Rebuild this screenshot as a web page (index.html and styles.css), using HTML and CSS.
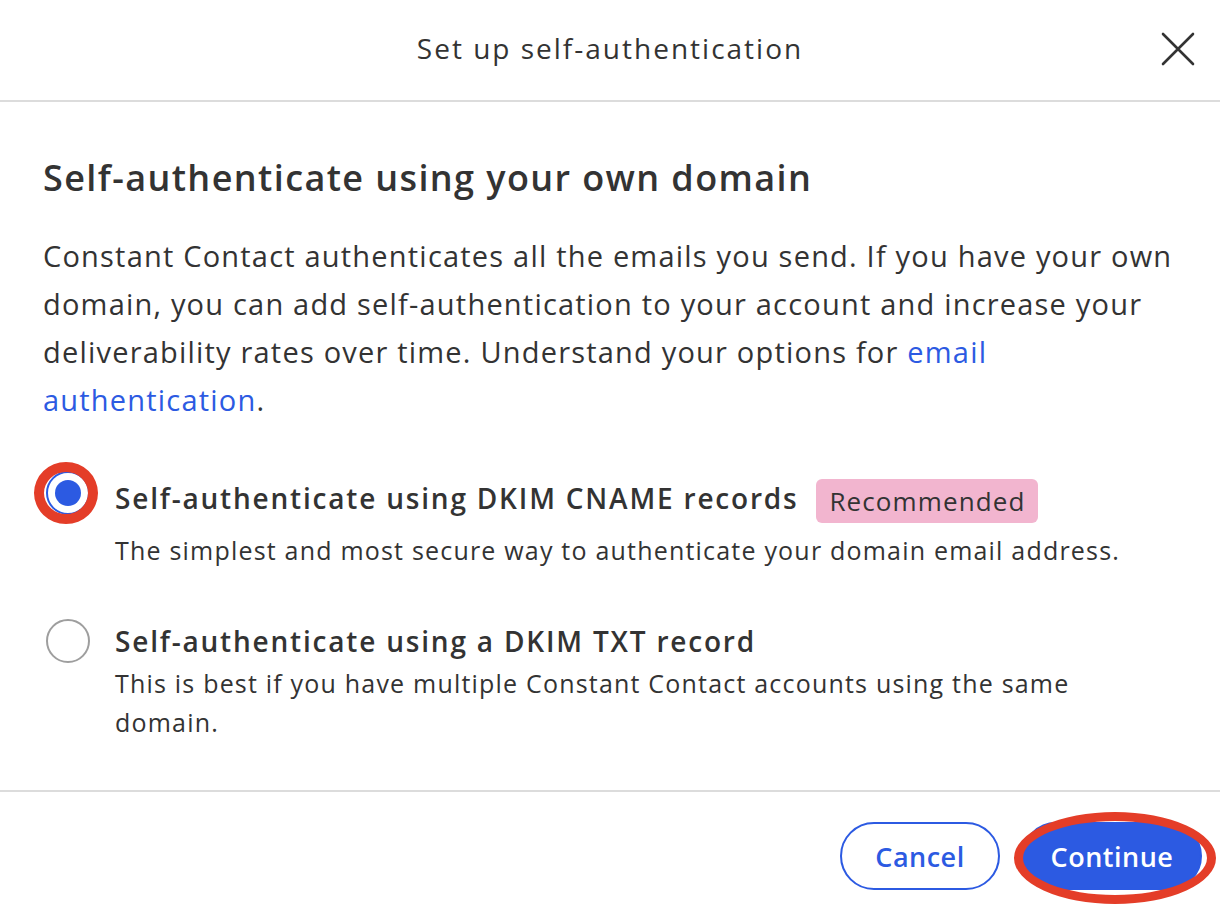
FILE: index.html
```html
<!DOCTYPE html>
<html lang="en">
<head>
<meta charset="utf-8">
<title>Set up self-authentication</title>
<link rel="stylesheet" href="styles.css">
</head>
<body>
<div class="modal">
  <header class="modal-header">
    <h1 class="modal-title">Set up self-authentication</h1>
    <button class="close-btn" aria-label="Close">
      <svg width="34" height="34" viewBox="0 0 34 34"><path d="M2 2 L32 32 M32 2 L2 32" stroke="#333" stroke-width="2.6" stroke-linecap="round" fill="none"/></svg>
    </button>
  </header>
  <section class="modal-body">
    <h2 class="heading">Self-authenticate using your own domain</h2>
    <p class="intro">Constant Contact authenticates all the emails you send. If you have your own domain, you can add self-authentication to your account and increase your deliverability rates over time. Understand your options for <a href="#" class="link">email authentication</a>.</p>
    <div class="options">
      <label class="option option-first">
        <span class="radio radio-checked"><span class="dot"></span><span class="ring-mark"></span></span>
        <span class="option-text">
          <span class="option-title">Self-authenticate using DKIM CNAME records <span class="badge">Recommended</span></span>
          <span class="option-desc">The simplest and most secure way to authenticate your domain email address.</span>
        </span>
      </label>
      <label class="option option-second">
        <span class="radio"></span>
        <span class="option-text">
          <span class="option-title">Self-authenticate using a DKIM TXT record</span>
          <span class="option-desc">This is best if you have multiple Constant Contact accounts using the same domain.</span>
        </span>
      </label>
    </div>
  </section>
  <footer class="modal-footer">
    <button class="btn btn-secondary">Cancel</button>
    <button class="btn btn-primary">Continue<span class="ellipse-mark"></span></button>
  </footer>
</div>
</body>
</html>
```
FILE: styles.css
```css
* { box-sizing: border-box; }
html, body { margin: 0; padding: 0; background: #fff; }
body {
  font-family: "Open Sans", "Noto Sans", sans-serif;
  color: #333;
  width: 1220px;
  height: 912px;
  overflow: hidden;
}
.modal { width: 1220px; }
.modal-header {
  position: relative;
  height: 102px;
  border-bottom: 2px solid #dcdcdc;
  display: flex;
  align-items: center;
  justify-content: center;
}
.modal-title {
  margin: 0;
  font-size: 28px;
  font-weight: 500;
  letter-spacing: 2px;
  color: #333;
  padding-bottom: 4px;
}
.close-btn {
  position: absolute;
  right: 25px;
  top: 32px;
  background: none;
  border: 0;
  padding: 0;
  width: 34px;
  height: 34px;
  cursor: pointer;
}
.modal-body { padding: 54px 36px 0 43px; }
.heading {
  margin: 0;
  font-size: 36px;
  line-height: 44px;
  font-weight: 600;
  letter-spacing: 1.4px;
  color: #333;
}
.intro {
  margin: 32px 0 0 0;
  font-size: 29px;
  line-height: 48px;
  letter-spacing: 1.2px;
  color: #333;
}
.link { color: #2c5ae2; text-decoration: none; }
.options { margin-top: 49px; display: flex; flex-direction: column; }
.option { display: flex; align-items: flex-start; gap: 25px; }
.radio {
  position: relative;
  flex: none;
  width: 44px;
  height: 44px;
  margin: -2px 0 0 3px;
  border-radius: 50%;
  border: 2px solid #9e9e9e;
  background: #fff;
  display: flex;
  align-items: center;
  justify-content: center;
}
.radio-checked { border-color: #2c5ae2; }
.dot { width: 26px; height: 26px; border-radius: 50%; background: #2c5ae2; }
.ring-mark {
  position: absolute;
  left: -14px;
  top: -11px;
  width: 64px;
  height: 62px;
  border-radius: 50%;
  border: 10px solid #e43d28;
}
.option-text { display: flex; flex-direction: column; }
.option-title {
  font-size: 28px;
  line-height: 40px;
  font-weight: 600;
  letter-spacing: 1.8px;
  color: #333;
  display: flex;
  align-items: center;
  gap: 18px;
}
.badge {
  display: inline-block;
  background: #f2b5cf;
  color: #333;
  font-weight: 400;
  font-size: 26px;
  line-height: 44px;
  letter-spacing: 1.1px;
  padding: 0 13px;
  border-radius: 6px;
  margin-top: 6px;
}
.option-desc {
  margin-top: 8px;
  font-size: 25px;
  line-height: 39px;
  letter-spacing: 1.2px;
  color: #333;
}
.option-second { margin-top: 51px; }
.option-second .option-desc { margin-top: 3px; padding-right: 70px; }
.modal-footer {
  margin-top: 48px;
  border-top: 2px solid #dcdcdc;
  padding: 30px 18px 0 0;
  display: flex;
  justify-content: flex-end;
  gap: 22px;
}
.btn {
  position: relative;
  height: 68px;
  border-radius: 34px;
  font-family: inherit;
  font-size: 27px;
  font-weight: 600;
  letter-spacing: 0.5px;
  cursor: pointer;
}
.btn-secondary {
  width: 160px;
  background: #fff;
  color: #2c5ae2;
  border: 2px solid #2c5ae2;
}
.btn-primary {
  width: 180px;
  background: #2c5ae2;
  color: #fff;
  border: 2px solid #2c5ae2;
}
.ellipse-mark {
  position: absolute;
  left: -10px;
  top: -12px;
  width: 202px;
  height: 92px;
  border-radius: 50%;
  border: 9px solid #e43d28;
}
```
